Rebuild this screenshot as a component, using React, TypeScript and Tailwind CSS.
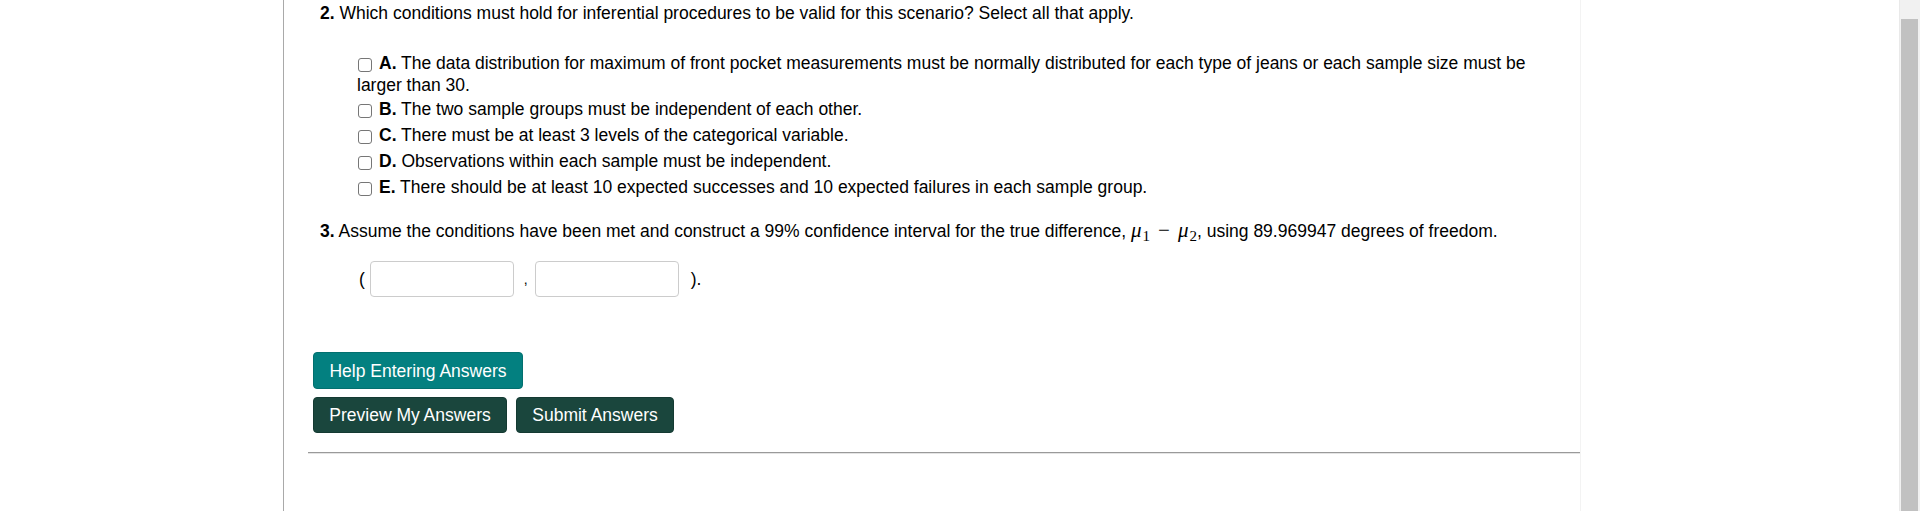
import React from "react";

const Box = () => (
  <span className="inline-block w-[14px] h-[14px] border border-[#767676] rounded-[3px] bg-white align-[-3px] mr-[7px] ml-[1px]" />
);

const options: { l: string; t: string }[] = [
  {
    l: "A.",
    t: "The data distribution for maximum of front pocket measurements must be normally distributed for each type of jeans or each sample size must be larger than 30.",
  },
  { l: "B.", t: "The two sample groups must be independent of each other." },
  { l: "C.", t: "There must be at least 3 levels of the categorical variable." },
  { l: "D.", t: "Observations within each sample must be independent." },
  { l: "E.", t: "There should be at least 10 expected successes and 10 expected failures in each sample group." },
];

export default function App() {
  return (
    <div className="flex h-[511px] w-[1920px] bg-white text-black font-['Liberation_Sans',Arial,sans-serif] text-[17.5px] leading-[22px] overflow-hidden">
      <div className="w-[283px] shrink-0" />
      <div className="w-[1298px] shrink-0 border-l border-[#a9a9a9] border-r border-r-[#f3f3f3] flex flex-col">
        <div className="pl-[36px] pr-[40px]">
          <p className="mt-[2px]">
            <b>2.</b> Which conditions must hold for inferential procedures to be valid for this scenario? Select all that apply.
          </p>
          <div className="mt-[28px] ml-[37px] flex flex-col">
            {options.map((o, i) => (
              <div key={o.l} className={i === 0 ? "" : i === 1 ? "mt-[2px]" : "mt-[4px]"}>
                <Box />
                <b>{o.l}</b> {o.t}
              </div>
            ))}
          </div>
          <p className="mt-[22px] h-[22px]">
            <b>3.</b> Assume the conditions have been met and construct a 99% confidence interval for the true difference,{" "}
            <span className="font-['Liberation_Serif',serif] text-[21px] leading-[0]">
              <i>μ</i>
              <span className="text-[15px] align-[-4px] ml-[1px]">1</span>
              <span className="mx-[8px]">−</span>
              <i>μ</i>
              <span className="text-[15px] align-[-4px] ml-[1px]">2</span>
            </span>
            , using 89.969947 degrees of freedom.
          </p>
          <div className="mt-[19px] ml-[39px] flex items-center h-[36px]">
            <span>(</span>
            <span className="ml-[5px] w-[144px] h-[36px] border border-[#cccccc] rounded-[4px] bg-white" />
            <span className="ml-[10px] mr-[7px] text-[14px]">,</span>
            <span className="w-[144px] h-[36px] border border-[#cccccc] rounded-[4px] bg-white" />
            <span className="ml-[12px]">).</span>
          </div>
        </div>
        <div className="pl-[29px] mt-[55px] flex flex-col gap-[8px]">
          <div className="flex">
            <button className="w-[210px] h-[37px] rounded-[4px] bg-[#038080] border border-[#02706f] text-white text-[17.5px]">
              Help Entering Answers
            </button>
          </div>
          <div className="flex gap-[9px]">
            <button className="w-[194px] h-[36px] rounded-[4px] bg-[#1a463d] border border-[#143a32] text-white text-[17.5px]">
              Preview My Answers
            </button>
            <button className="w-[158px] h-[36px] rounded-[4px] bg-[#1a463d] border border-[#143a32] text-white text-[17.5px]">
              Submit Answers
            </button>
          </div>
        </div>
        <div className="ml-[24px] mt-[19px] h-[2px] border-t border-[#9a9a9a] border-b border-b-[#e4e4e4]" />
      </div>
      <div className="flex-1" />
      <div className="w-[21px] shrink-0 bg-[#f1f1f1] border-l border-[#e9e9e9] pt-[19px] pl-[1px]">
        <div className="w-[17px] h-full bg-[#c1c1c1]" />
      </div>
    </div>
  );
}
